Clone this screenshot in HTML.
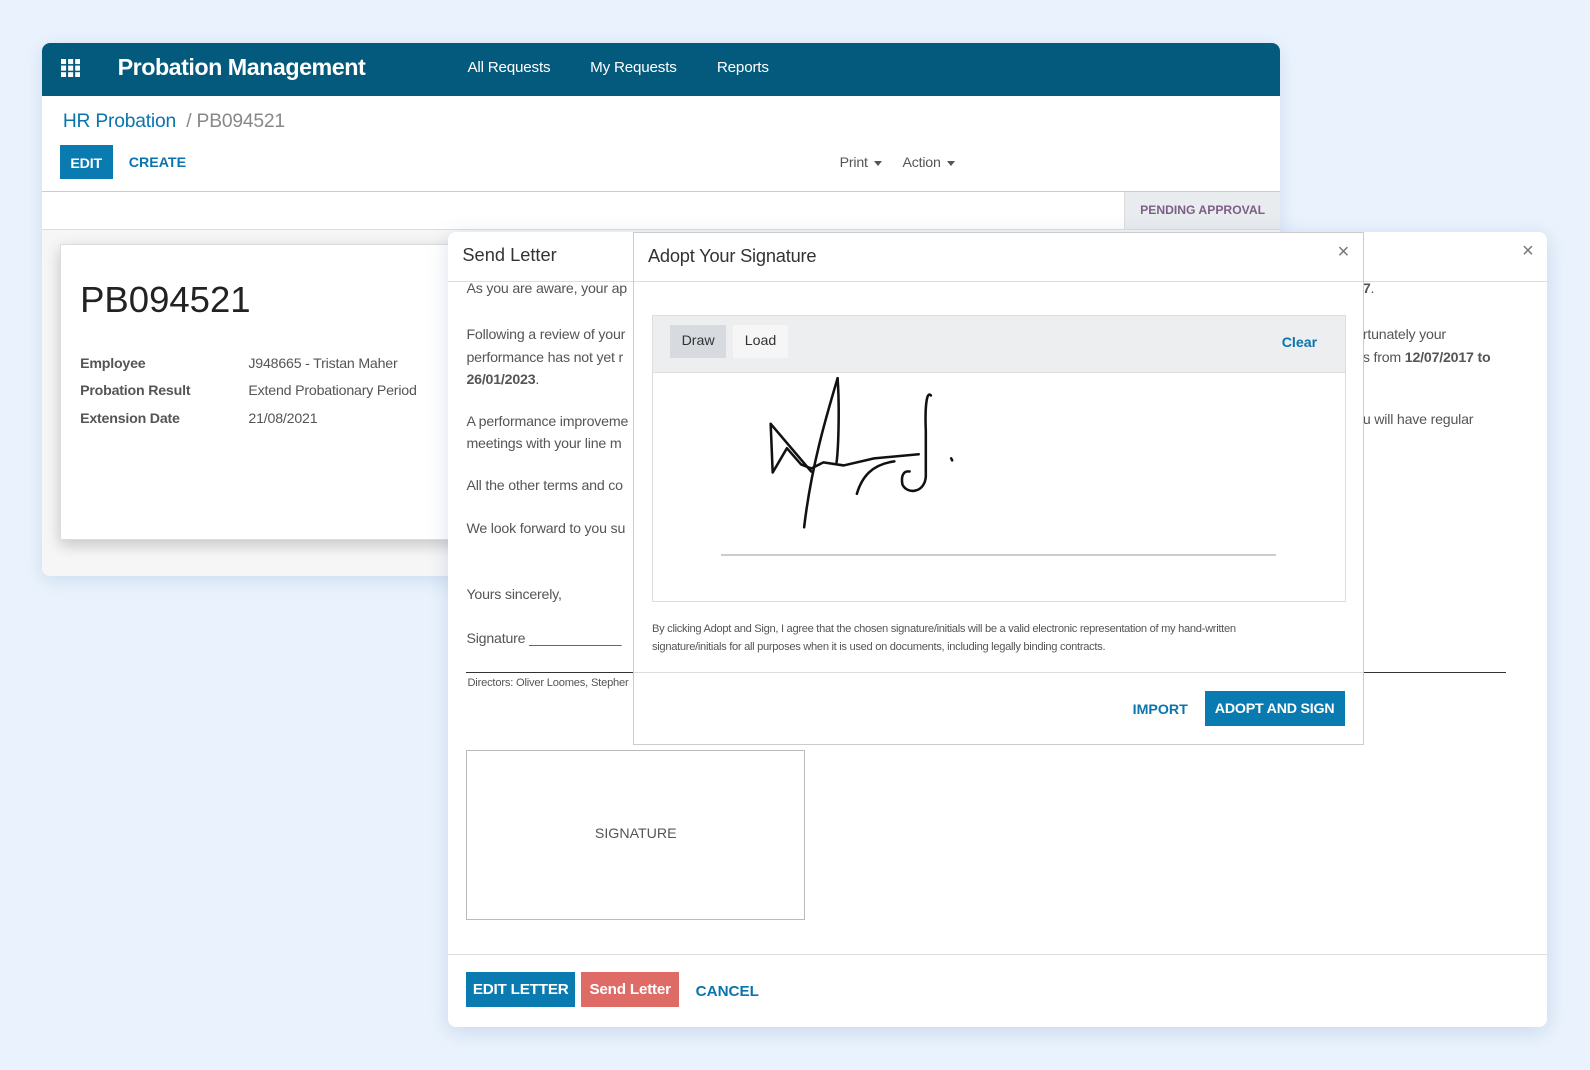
<!DOCTYPE html>
<html><head><meta charset="utf-8"><style>
html,body{margin:0;padding:0;width:1590px;height:1070px;overflow:hidden;background:#eaf3fd;font-family:"Liberation Sans",sans-serif;}
#w{position:absolute;left:0;top:0;width:1568px;height:1055px;zoom:1.01403;}
.a{position:absolute;}
.card{left:41px;top:42px;width:1221px;height:526px;background:#fff;border-radius:8px;box-shadow:0 4px 18px rgba(80,120,170,.18);overflow:hidden;}
.hdr{left:0;top:0;width:1221px;height:53px;background:#045a7c;}
.nav{color:#fff;font-size:15px;top:16px;letter-spacing:-0.2px;}
.t{color:#555;font-size:14px;white-space:nowrap;letter-spacing:-0.2px;}
.b{font-weight:bold;}
.blue{color:#0a75ad;}
.btn{background:#0a7bb0;color:#fff;font-weight:bold;font-size:15px;text-align:center;box-sizing:border-box;padding-top:2px;letter-spacing:-0.2px;}
.car{display:inline-block;width:0;height:0;border-left:4px solid transparent;border-right:4px solid transparent;border-top:5px solid #555;vertical-align:middle;margin-left:6px;}
</style></head><body><div id="w">

<div class="a card">
 <div class="a hdr">
  <svg class="a" style="left:19px;top:16px" width="19" height="18" viewBox="0 0 19 18" fill="#fff">
   <rect x="0" y="0" width="5" height="5"/><rect x="7" y="0" width="5" height="5"/><rect x="14" y="0" width="5" height="5"/>
   <rect x="0" y="6.5" width="5" height="5"/><rect x="7" y="6.5" width="5" height="5"/><rect x="14" y="6.5" width="5" height="5"/>
   <rect x="0" y="13" width="5" height="5"/><rect x="7" y="13" width="5" height="5"/><rect x="14" y="13" width="5" height="5"/>
  </svg>
  <div class="a" style="left:75px;top:11px;color:#fff;font-size:23px;font-weight:bold;letter-spacing:-0.5px">Probation Management</div>
  <div class="a nav" style="left:420px">All Requests</div>
  <div class="a nav" style="left:541px">My Requests</div>
  <div class="a nav" style="left:666px">Reports</div>
 </div>
 <div class="a" style="left:21px;top:67px;font-size:19px;white-space:nowrap;letter-spacing:-0.2px"><span class="blue">HR Probation</span> <span style="color:#888">&nbsp;/ PB094521</span></div>
 <div class="a btn" style="left:18px;top:101px;width:52px;height:34px;line-height:34px;font-size:14px">EDIT</div>
 <div class="a blue b" style="left:86px;top:111px;font-size:14px">CREATE</div>
 <div class="a t" style="left:787px;top:111px;font-size:14px">Print<span class="car"></span></div>
 <div class="a t" style="left:849px;top:111px;font-size:14px">Action<span class="car"></span></div>
 <div class="a" style="left:0;top:146px;width:1221px;height:1px;background:#ccc"></div>
 <div class="a" style="left:1067px;top:147px;width:154px;height:37px;background:#e9ecef;border-left:1px solid #ddd;color:#7d5f86;font-size:12px;font-weight:bold;line-height:37px;text-align:center">PENDING APPROVAL</div>
 <div class="a" style="left:0;top:184px;width:1221px;height:342px;background:#f6f6f6;border-top:1px solid #ddd"></div>
 <div class="a" style="left:18px;top:199px;width:420px;height:290px;background:#fff;border:1px solid #ddd;box-shadow:0 5px 14px rgba(0,0,0,.2)">
  <div class="a" style="left:19px;top:33px;font-size:36px;color:#222">PB094521</div>
  <div class="a t b" style="left:19px;top:109px">Employee</div><div class="a t" style="left:185px;top:109px">J948665 - Tristan Maher</div>
  <div class="a t b" style="left:19px;top:136px">Probation Result</div><div class="a t" style="left:185px;top:136px">Extend Probationary Period</div>
  <div class="a t b" style="left:19px;top:163px">Extension Date</div><div class="a t" style="left:185px;top:163px">21/08/2021</div>
 </div>
</div>

<div class="a" style="left:442px;top:229px;width:1084px;height:784px;background:#fff;border-radius:8px;box-shadow:0 4px 20px rgba(80,120,170,.22)">
 <div class="a" style="left:14px;top:12px;font-size:18px;color:#333">Send Letter</div>
 <div class="a" style="left:1059px;top:8px;font-size:20px;color:#777">×</div>
 <div class="a" style="left:0;top:48px;width:1084px;height:1px;background:#ddd"></div>
 <div class="a t" style="left:18px;top:48px">As you are aware, your ap</div>
 <div class="a t" style="left:18px;top:91px;line-height:22px">Following a review of your<br>performance has not yet r<br><b>26/01/2023</b>.</div>
 <div class="a t" style="left:18px;top:176px;line-height:22px">A performance improveme<br>meetings with your line m</div>
 <div class="a t" style="left:18px;top:242px">All the other terms and co</div>
 <div class="a t" style="left:18px;top:285px">We look forward to you su</div>
 <div class="a t" style="left:18px;top:350px">Yours sincerely,</div>
 <div class="a t" style="left:18px;top:393px">Signature ____________</div>
 <div class="a" style="left:18px;top:434px;width:1025px;height:1px;background:#333"></div>
 <div class="a t" style="left:19px;top:439px;font-size:11px">Directors: Oliver Loomes, Stepher</div>
 <div class="a t" style="left:902px;top:48px"><b>7</b>.</div>
 <div class="a t" style="left:902px;top:91px;line-height:22px">rtunately your<br>s from <b>12/07/2017 to</b></div>
 <div class="a t" style="left:902px;top:177px">u will have regular</div>
 <div class="a" style="left:18px;top:511px;width:332px;height:165px;border:1px solid #bbb;text-align:center;line-height:165px;color:#555;font-size:14px">SIGNATURE</div>
 <div class="a" style="left:0;top:712px;width:1084px;height:1px;background:#ddd"></div>
 <div class="a btn" style="left:18px;top:730px;width:107px;height:34px;line-height:32px;font-size:15px">EDIT LETTER</div>
 <div class="a btn" style="left:131px;top:730px;width:97px;height:34px;line-height:32px;font-size:15px;background:#df6b66">Send Letter</div>
 <div class="a blue b" style="left:244px;top:740px;font-size:15px">CANCEL</div>
</div>

<div class="a" style="left:624px;top:229px;width:719px;height:504px;background:#fff;border:1px solid #ccc">
 <div class="a" style="left:14px;top:12px;font-size:18px;color:#333;letter-spacing:-0.2px">Adopt Your Signature</div>
 <div class="a" style="left:694px;top:8px;font-size:20px;color:#777">×</div>
 <div class="a" style="left:0;top:47px;width:719px;height:1px;background:#ddd"></div>
 <div class="a" style="left:18px;top:81px;width:682px;height:281px;border:1px solid #ddd">
  <div class="a" style="left:0;top:0;width:682px;height:55px;background:#eceef0;border-bottom:1px solid #ddd"></div>
  <div class="a" style="left:17px;top:9px;width:55px;height:32px;background:#d7dbe0;text-align:center;line-height:32px;font-size:14px;color:#333">Draw</div>
  <div class="a" style="left:79px;top:9px;width:54px;height:32px;background:#f6f6f6;text-align:center;line-height:32px;font-size:14px;color:#333">Load</div>
  <div class="a blue b" style="left:620px;top:18px;font-size:14px">Clear</div>
  <div class="a" style="left:67px;top:234px;width:547px;height:2px;background:#ccc"></div>
 </div>
 <div class="a t" style="left:18px;top:381px;font-size:11px;line-height:18px;letter-spacing:-0.3px">By clicking Adopt and Sign, I agree that the chosen signature/initials will be a valid electronic representation of my hand-written<br>signature/initials for all purposes when it is used on documents, including legally binding contracts.</div>
 <div class="a" style="left:0;top:433px;width:719px;height:1px;background:#ddd"></div>
 <div class="a blue b" style="left:492px;top:462px;font-size:14px">IMPORT</div>
 <div class="a btn" style="left:563px;top:451px;width:138px;height:35px;line-height:33px;font-size:14px">ADOPT AND SIGN</div>
</div>

<svg class="a" style="left:0;top:0" width="1568" height="1055" fill="none" stroke="#111" stroke-width="2.5" stroke-linecap="round" stroke-linejoin="round">
 <path d="M826 373 C815 410 800 460 793 520"/>
 <path d="M826 373 C828 400 827 440 825 456"/>
 <path d="M760 418 L762 466 L776 442 L790 458 L800 462 L812 456 L832 459 L862 452 L906 448"/>
 <path d="M760 418 L800 465"/>
 <path d="M845 487 C850 470 860 458 882 455"/>
 <path d="M918 390 C914 385 912 400 913 425 L913 470 C912 486 895 488 890 478 C888 468 892 464 897 465"/>
 <path d="M938 452 L939 454"/>
</svg>

</div></body></html>
